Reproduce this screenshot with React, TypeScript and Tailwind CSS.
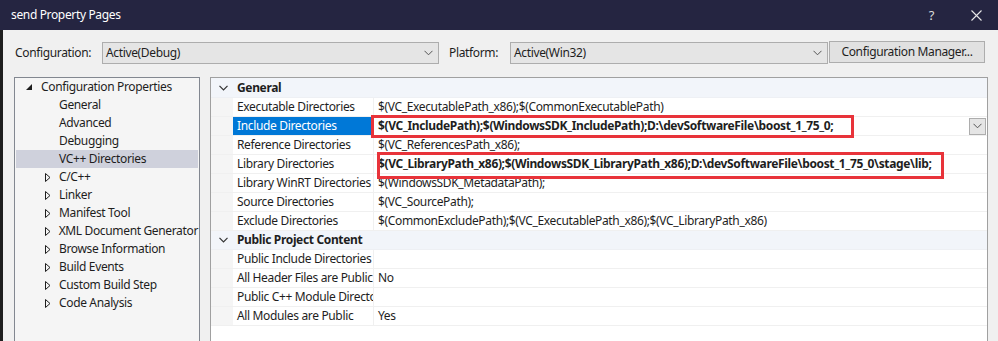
import React from 'react'

const font = "font-['Noto_Sans','Liberation_Sans',sans-serif]"

const tree: { label: string; level: 0 | 1; kind?: 'open' | 'closed'; selected?: boolean }[] = [
  { label: 'Configuration Properties', level: 0, kind: 'open' },
  { label: 'General', level: 1 },
  { label: 'Advanced', level: 1 },
  { label: 'Debugging', level: 1 },
  { label: 'VC++ Directories', level: 1, selected: true },
  { label: 'C/C++', level: 1, kind: 'closed' },
  { label: 'Linker', level: 1, kind: 'closed' },
  { label: 'Manifest Tool', level: 1, kind: 'closed' },
  { label: 'XML Document Generator', level: 1, kind: 'closed' },
  { label: 'Browse Information', level: 1, kind: 'closed' },
  { label: 'Build Events', level: 1, kind: 'closed' },
  { label: 'Custom Build Step', level: 1, kind: 'closed' },
  { label: 'Code Analysis', level: 1, kind: 'closed' },
]

type Row = { name: string; value?: string; bold?: boolean; selected?: boolean; combo?: boolean }

const general: Row[] = [
  { name: 'Executable Directories', value: '$(VC_ExecutablePath_x86);$(CommonExecutablePath)' },
  { name: 'Include Directories', value: '$(VC_IncludePath);$(WindowsSDK_IncludePath);D:\\devSoftwareFile\\boost_1_75_0;', bold: true, selected: true, combo: true },
  { name: 'Reference Directories', value: '$(VC_ReferencesPath_x86);' },
  { name: 'Library Directories', value: '$(VC_LibraryPath_x86);$(WindowsSDK_LibraryPath_x86);D:\\devSoftwareFile\\boost_1_75_0\\stage\\lib;', bold: true },
  { name: 'Library WinRT Directories', value: '$(WindowsSDK_MetadataPath);' },
  { name: 'Source Directories', value: '$(VC_SourcePath);' },
  { name: 'Exclude Directories', value: '$(CommonExcludePath);$(VC_ExecutablePath_x86);$(VC_LibraryPath_x86)' },
]

const publicContent: Row[] = [
  { name: 'Public Include Directories' },
  { name: 'All Header Files are Public', value: 'No' },
  { name: 'Public C++ Module Directories' },
  { name: 'All Modules are Public', value: 'Yes' },
]

function Chevron({ className }: { className?: string }) {
  return (
    <svg width="9" height="6" viewBox="0 0 9 6" className={className}>
      <polyline points="0.5,0.8 4.5,4.8 8.5,0.8" fill="none" stroke="#555" strokeWidth="1" />
    </svg>
  )
}

function Combo({ value, width }: { value: string; width: string }) {
  return (
    <div className={`${width} h-[22px] bg-[#e5e5e5] border border-[#adadad] flex items-center pl-[3px] pr-[5px]`}>
      <span className="flex-1 text-[#1e1e1e]">{value}</span>
      <Chevron />
    </div>
  )
}

function Category({ title, h }: { title: string; h: string }) {
  return (
    <div className={`${h} bg-[#f2f5fa] flex items-center border-b border-[#eef0f4]`}>
      <div className="w-[22px] flex justify-center pl-[2px]">
        <svg width="9" height="6" viewBox="0 0 9 6">
          <polyline points="0.5,0.8 4.5,4.8 8.5,0.8" fill="none" stroke="#333" strokeWidth="1.2" />
        </svg>
      </div>
      <span className="pl-[4px] font-bold text-[#1e1e1e]">{title}</span>
    </div>
  )
}

function PropRow({ row }: { row: Row }) {
  return (
    <div className="h-[19px] flex border-b border-[#f0f0f0]">
      <div className="w-[22px] bg-[#f5f5f5]" />
      <div
        className={`w-[141px] shrink-0 pl-[4px] flex items-center whitespace-nowrap overflow-hidden border-r border-[#f0f0f0] ${
          row.selected ? 'bg-[#0078d7] text-white' : 'text-[#1e1e1e]'
        }`}
      >
        {row.name}
      </div>
      <div className={`flex-1 flex items-center pl-[4px] whitespace-nowrap text-[#1e1e1e] ${row.bold ? 'font-bold' : ''}`}>
        <span className="flex-1">{row.value}</span>
        {row.combo && (
          <div className="w-[17px] h-[17px] mr-[1px] bg-[#e5e5e5] border border-[#adadad] flex items-center justify-center">
            <Chevron />
          </div>
        )}
      </div>
    </div>
  )
}

export default function App() {
  return (
    <div className={`w-[998px] h-[341px] overflow-hidden bg-[#f0f0f0] text-[12px] leading-none tracking-[-0.35px] ${font}`}>
      <div className="h-[30px] bg-[#252541] flex items-center pl-[11px] pr-[16px] text-white">
        <span className="flex-1 text-[12px]">send Property Pages</span>
        <span className="mr-[37px] text-[13px] text-[#dcdcdc]">?</span>
        <svg width="11" height="11" viewBox="0 0 11 11">
          <path d="M0.5 0.5 L10.5 10.5 M10.5 0.5 L0.5 10.5" stroke="#e8e8e8" strokeWidth="1.1" />
        </svg>
      </div>

      <div className="flex h-[311px]">
        <div className="w-[3px] bg-[#1e1e1e]" />
        <div className="flex-1 pl-[11px] pt-[12px]">
          <div className="flex items-center h-[22px]">
            <span className="w-[88px] pl-[1px] text-[#1e1e1e]">Configuration:</span>
            <Combo value="Active(Debug)" width="w-[337px]" />
            <span className="w-[71px] pl-[10px] text-[#1e1e1e]">Platform:</span>
            <Combo value="Active(Win32)" width="w-[318px]" />
            <button className="ml-[1px] -mt-[2px] w-[156px] h-[22px] bg-[#e1e1e1] border border-[#adadad] text-[#1e1e1e]">
              Configuration Manager...
            </button>
          </div>

          <div className="flex gap-[10px] mt-[13px]">
            <div className="w-[186px] h-[280px] bg-[#f5f5f5] border border-[#828790]">
              {tree.map((t) => (
                <div
                  key={t.label}
                  className={`h-[18px] mx-[1px] flex items-center whitespace-nowrap text-[#1e1e1e] ${t.selected ? 'bg-[#cfd1dc]' : ''}`}
                >
                  <div className={`${t.level === 0 ? 'w-[25px] pl-[10px]' : 'w-[43px] pl-[29px]'} flex items-center`}>
                    {t.kind === 'open' && (
                      <svg width="6" height="6" viewBox="0 0 6 6">
                        <polygon points="6,0 6,6 0,6" fill="#1e1e1e" />
                      </svg>
                    )}
                    {t.kind === 'closed' && (
                      <svg width="6" height="9" viewBox="0 0 6 9">
                        <polygon points="0.5,0.5 5,4.5 0.5,8.5" fill="none" stroke="#1e1e1e" strokeWidth="1" />
                      </svg>
                    )}
                  </div>
                  <span>{t.label}</span>
                </div>
              ))}
            </div>

            <div className="relative w-[778px] h-[280px] bg-white border border-[#a0a0a0]">
              <Category title="General" h="h-[20px]" />
              {general.map((r) => (
                <PropRow key={r.name} row={r} />
              ))}
              <Category title="Public Project Content" h="h-[19px]" />
              {publicContent.map((r) => (
                <PropRow key={r.name} row={r} />
              ))}
              <div className="absolute left-[160px] top-[37px] w-[483px] h-[23px] border-[3px] border-[#e8333a]" />
              <div className="absolute left-[166px] top-[74px] w-[567px] h-[27px] border-[3px] border-[#e8333a]" />
            </div>
          </div>
        </div>
      </div>
    </div>
  )
}
